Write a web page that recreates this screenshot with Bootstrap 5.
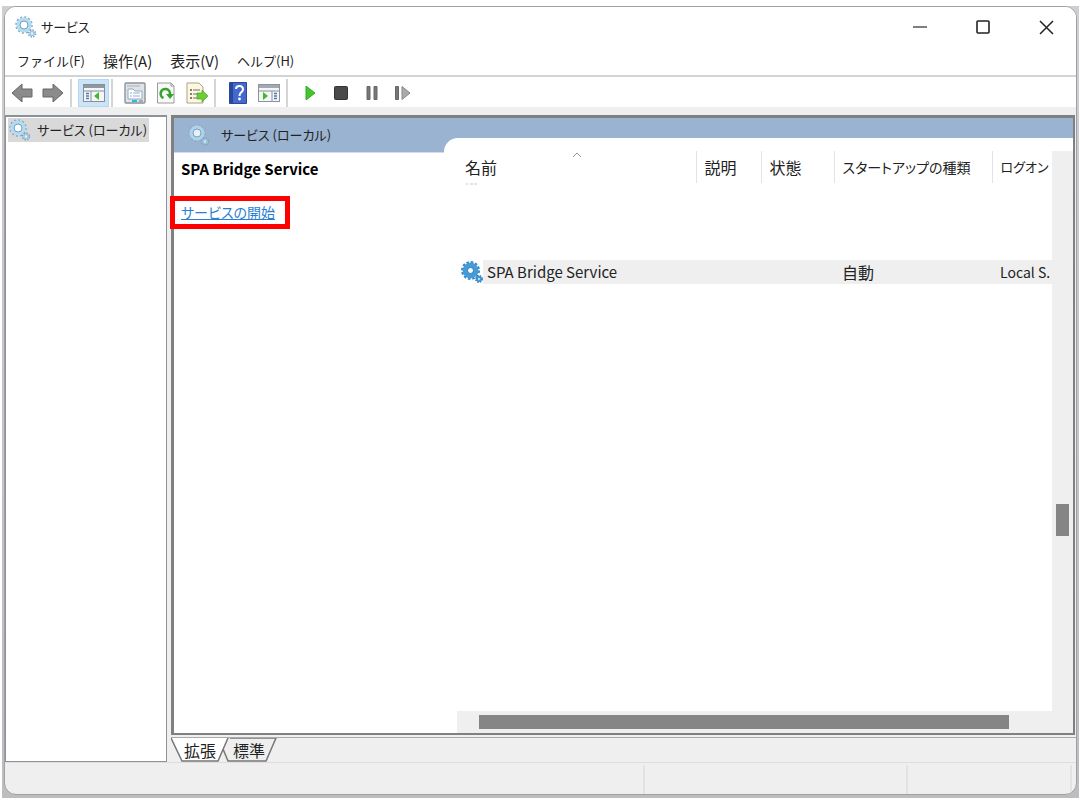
<!DOCTYPE html>
<html lang="ja">
<head>
<meta charset="utf-8">
<meta name="viewport" content="width=device-width, initial-scale=1">
<title>サービス</title>
<link rel="stylesheet" href="https://cdn.jsdelivr.net/npm/bootstrap@5.3.0/dist/css/bootstrap.min.css">
<style>
body{font-family:"Noto Sans CJK JP",sans-serif;font-size:16px;line-height:24px;color:#222;font-feature-settings:"palt";background:#fff;min-height:100vh;padding:6px 1px 3px 2px}
.backdrop{background:linear-gradient(#cfcfd1,#bdbdbf);padding:0 2px 3px}
.app-window{background:#efefef;border:1px solid #a0a0a0;border-radius:12px;overflow:hidden;min-width:0}
.shrinkable{min-width:0}
.kana{font-size:13px}
.kana-lg{font-size:14px}
button{border:0;background:none;color:inherit;padding:0}
svg{display:block;flex:none}
.titlebar{height:39px;padding:0 18px 0 10px}
.win-buttons{gap:39px}
.menubar{height:31px;padding:0 12px;gap:18px;border-bottom:2px solid #d3d3d3}
.menubar button{font-size:15px}
.menubar .kana{font-size:13px}
.toolstrip{height:30px;padding:2px 1px 0}
.toolstrip button{width:31px;height:28px;display:flex;align-items:center;justify-content:center}
.toolstrip .active-tool{background:#cce4f8;border:1px solid #b5d7f3}
.rule{width:2px;height:28px;background:#d5d5d5;margin:0 6px 0 2px}
.main-area{padding-top:8px;gap:4px}
.tree{width:162px;border:1px solid #8c929b;border-top-width:2px;background:#fff;padding:1px 2px}
.tree-node{background:#d9d9d9;height:24px;width:max-content;gap:6px;padding:0 2px 0 1px;color:#222}
.pane{border:3px solid #808080;border-right-width:2px;border-bottom-width:2px;background:#9ab3d0;margin-right:1px}
.detail{width:270px}
.banner{height:34px;padding-left:14px;gap:11px}
.detail-body{background:#fff;border-top:1px solid #d0dcea;padding:4px 7px;font-size:15px}
.start-link{color:#2a7fd4;text-decoration:underline;align-self:flex-start;border:5px solid #f00;margin:15px 0 0 -11px;padding:0 10px 0 6px;line-height:23px}
.list-side{padding-top:20px}
.list-sheet{background:#fff;border-top-left-radius:14px;padding:13px 0 0 13px}
.svc-table{width:100%;table-layout:fixed;border-collapse:collapse}
.col-desc{width:65px}
.col-state{width:73px}
.col-start{width:158px}
.col-logon{width:60px}
.svc-table th{font-weight:400;height:32px;padding:0 0 0 8px;border-right:1px solid #e3e3e3;white-space:nowrap;position:relative}
.svc-table th:last-child{border:0}
.svc-table td{height:24px;padding:0 0 0 8px;white-space:nowrap}
.svc-table .gap-row td{height:77px;vertical-align:top}
.svc-row td{background:#efefef}
.svc-row td:first-child{padding-left:4px;font-size:15px;background:linear-gradient(90deg,#fff 26px,#efefef 26px)}
.sort-mark{position:absolute;top:1px;left:48%}
.vbar{width:21px;background:#efefef;padding:353px 4px 0}
.vthumb{height:32px;background:#858585}
.hbar{height:22px;background:#efefef;padding:4px 43px 4px 22px}
.hthumb{height:14px;background:#858585}
.tabs{height:25px;margin-top:2px;border-top:1px solid #aaa}
.tab-btn{position:relative;z-index:1;height:24px;width:58px;line-height:22px}
.tab-btn svg{position:absolute;left:0;top:0;z-index:-1}
.tab-btn+.tab-btn{z-index:0;margin-left:-9px}
.statusbar{height:32px;border-top:1px solid #dedede}
.statusbar div{border-right:2px solid #e2e2e2;margin-top:2px}
.status-main{width:640px}
.status-mid{width:263px}
</style>
</head>
<body class="d-flex flex-column">
<svg width="0" height="0" class="position-absolute" aria-hidden="true">
<symbol id="gears" viewBox="0 0 22 22"><circle cx="9" cy="9" r="7.6" fill="none" stroke="#8aabc5" stroke-width="2.4" stroke-dasharray="2 1.98"/><circle cx="9" cy="9" r="5.6" fill="none" stroke="#b3dcf2" stroke-width="4"/><circle cx="9" cy="9" r="4" fill="#fff" stroke="#6d9fc4"/><circle cx="17" cy="17.5" r="3.4" fill="none" stroke="#7ca0bd" stroke-width="1.8" stroke-dasharray="1.4 1.27"/><circle cx="17" cy="17.5" r="2" fill="#e5f4fb" stroke="#9bc8e2" stroke-width="1.6"/></symbol>
<symbol id="gears-solid" viewBox="0 0 22 22"><circle cx="9.5" cy="9.5" r="8" fill="none" stroke="#3b87c4" stroke-width="3" stroke-dasharray="2.4 1.79"/><circle cx="9.5" cy="9.5" r="5.4" fill="#fff" stroke="#459bd8" stroke-width="5"/><circle cx="9.5" cy="9.5" r="3" fill="none" stroke="#2e7dbd"/><circle cx="18" cy="18" r="3" fill="#459bd8" stroke="#3b87c4" stroke-width="2" stroke-dasharray="1.4 1"/><circle cx="18" cy="18" r="1" fill="#d7ecfa"/></symbol>
</svg>
<div class="backdrop d-flex flex-column flex-grow-1">
<div class="app-window d-flex flex-column flex-grow-1">
<header class="bg-white">
<div class="titlebar d-flex align-items-center">
<svg width="22" height="22"><use href="#gears"/></svg><span class="kana ps-1 flex-grow-1">サービス</span>
<div class="win-buttons d-flex">
<button aria-label="最小化"><svg width="24" height="24"><path d="M5 12h14" stroke="#555" stroke-width="1.4"/></svg></button>
<button aria-label="最大化"><svg width="24" height="24"><rect x="6" y="6" width="12" height="12" rx="1" fill="none" stroke="#222" stroke-width="1.6"/></svg></button>
<button aria-label="閉じる"><svg width="24" height="24"><path d="M6 6l13 13M19 6L6 19" stroke="#222" stroke-width="1.5"/></svg></button>
</div>
</div>
<nav class="menubar d-flex align-items-center" aria-label="メニュー">
<button class="kana">ファイル(F)</button><button>操作(A)</button><button>表示(V)</button><button class="kana">ヘルプ(H)</button>
</nav>
<div class="toolstrip d-flex align-items-center">
<button aria-label="戻る"><svg width="22" height="20"><path d="M1 10L11 1v5h10v8H11v5z" fill="#8b8b8b" stroke="#666"/></svg></button>
<button aria-label="進む"><svg width="22" height="20"><path d="M21 10L11 1v5H1v8h10v5z" fill="#8b8b8b" stroke="#666"/></svg></button>
<span class="rule"></span>
<button class="active-tool" aria-label="ツリーの表示"><svg width="22" height="18"><rect x=".5" y=".5" width="21" height="17" fill="#f5f6f8" stroke="#858e99"/><path d="M1 1h20v3H1z" fill="#8e99a6"/><path d="M1 7h20M8 7v10" stroke="#858e99"/><path d="M3 9.500h3M3 12h3M3 14.500h3" stroke="#4c79b5" stroke-width="1.4"/><path d="M16 8v8l-5-4z" fill="#43b82c"/></svg></button>
<span class="rule"></span>
<button aria-label="プロパティ"><svg width="22" height="22"><rect x="1" y="1" width="20" height="20" rx="1" fill="#dfe3e8" stroke="#8a929b" stroke-width="1.4"/><path d="M3 4h13" stroke="#a8b0b9"/><path d="M4 7h5l2 2h7v8H4z" fill="#fff" stroke="#8fa6c0"/><path d="M6 11h2M9 11h7M6 14h2M9 14h7" stroke="#8eb0d4"/><path d="M8 19h5" stroke="#29b8e8" stroke-width="2"/><path d="M15 19h4" stroke="#aaa" stroke-width="2"/></svg></button>
<button aria-label="最新の情報に更新"><svg width="20" height="22"><path d="M1.500 1H15l3 3v17H1.500z" fill="#f8f8f8" stroke="#9a9a9a"/><path d="M15 1v3h3" fill="none" stroke="#9a9a9a"/><path d="M7.500 16A4.700 4.700 0 1 1 14 12" fill="none" stroke="#35a32c" stroke-width="2.600"/><path d="M10 12h8l-4 5z" fill="#35a32c"/></svg></button>
<button aria-label="一覧のエクスポート"><svg width="22" height="22"><path d="M1 1h12l4 4v16H1z" fill="#fdf7dc" stroke="#a8a389"/><path d="M4 8h2M4 12h2M4 16h2" stroke="#555" stroke-width="1.6"/><path d="M7 8h7M7 12h4M7 16h4" stroke="#9a9aa8" stroke-width="1.4"/><path d="M11 11h5V8l6 6-6 6v-3h-5z" fill="#6ccd35" stroke="#45a52a" stroke-width=".7"/></svg></button>
<span class="rule"></span>
<button aria-label="ヘルプ"><svg width="18" height="22"><path d="M.5.500h17v21H.500z" fill="#4568cf" stroke="#2e4695"/><path d="M1 1h3v20H1z" fill="#27489f"/><path d="M7 7Q7 4 10.500 4T14 7.500Q14 9 12 10.500 10.500 12 10.500 14" fill="none" stroke="#fff" stroke-width="2"/><circle cx="10.500" cy="17" r="1.400" fill="#fff"/></svg></button>
<button aria-label="操作ウィンドウ"><svg width="22" height="18"><rect x=".5" y=".5" width="21" height="17" fill="#f5f6f8" stroke="#8a929b"/><path d="M1 1h20v3H1z" fill="#a2a9b1"/><path d="M1 7h20M14 7v10" stroke="#8a929b"/><path d="M16 9.500h3M16 12h3M16 14.500h3" stroke="#4c79b5" stroke-width="1.400"/><path d="M5 8v8l5-4z" fill="#43b82c"/></svg></button>
<span class="rule"></span>
<button aria-label="開始"><svg width="12" height="16"><path d="M2 1v14l9-7z" fill="#43c62c" stroke="#35a827"/></svg></button>
<button aria-label="停止"><svg width="14" height="14"><rect x=".5" y=".5" width="13" height="13" rx="1" fill="#4a4a4a" stroke="#333"/></svg></button>
<button aria-label="一時停止"><svg width="12" height="14"><path d="M1 .5h3v13H1zM8 .5h3v13H8z" fill="#777" stroke="#666"/></svg></button>
<button aria-label="再起動"><svg width="16" height="14"><path d="M.5.500h3v13h-3z" fill="#777" stroke="#666"/><path d="M7 .5v13l8-6.500z" fill="#aaa" stroke="#888"/></svg></button>
</div>
</header>
<div class="main-area d-flex flex-grow-1">
<nav class="tree flex-shrink-0" aria-label="コンソール ツリー">
<a href="#" class="tree-node kana d-flex align-items-center text-decoration-none text-nowrap"><svg width="22" height="22"><use href="#gears"/></svg>サービス (ローカル)</a>
</nav>
<div class="shrinkable d-flex flex-column flex-grow-1">
<main class="pane d-flex flex-grow-1">
<section class="detail d-flex flex-column flex-shrink-0">
<div class="banner kana d-flex align-items-center"><svg width="22" height="22" opacity=".8"><use href="#gears"/></svg>サービス (ローカル)</div>
<div class="detail-body d-flex flex-column flex-grow-1"><strong class="fw-bold text-black">SPA Bridge Service</strong><a href="#" class="start-link kana-lg">サービスの開始</a></div>
</section>
<section class="list-side shrinkable d-flex flex-grow-1">
<div class="list-sheet shrinkable d-flex flex-grow-1">
<div class="shrinkable d-flex flex-column flex-grow-1">
<table class="svc-table">
<colgroup><col><col class="col-desc"><col class="col-state"><col class="col-start"><col class="col-logon"></colgroup>
<thead><tr><th>名前<svg class="sort-mark" width="10" height="6"><path d="M1 5l4-4 4 4" fill="none" stroke="#999"/></svg></th><th>説明</th><th>状態</th><th class="kana-lg">スタートアップの種類</th><th class="kana">ログオン</th></tr></thead>
<tbody>
<tr class="gap-row" aria-hidden="true"><td colspan="5"><svg width="14" height="3"><path d="M1 1h2M5 1h3M9 1h3" stroke="#c5cbd6"/></svg></td></tr>
<tr class="svc-row"><td><span class="d-flex align-items-center"><svg width="22" height="22"><use href="#gears-solid"/></svg><span class="ms-1">SPA Bridge Service</span></span></td><td></td><td></td><td>自動</td><td class="kana-lg">Local S.</td></tr>
</tbody>
</table>
<div class="hbar mt-auto"><div class="hthumb"></div></div>
</div>
<div class="vbar flex-shrink-0"><div class="vthumb"></div></div>
</div>
</section>
</main>
<div class="tabs d-flex">
<button class="tab-btn"><svg width="58" height="24"><path d="M0 0l11 23h36L57 0" fill="#fff" stroke="#777" stroke-width="1.500"/></svg>拡張</button><button class="tab-btn"><svg width="58" height="24"><path d="M3 11l5 12h38L56 0H10" fill="#efefef" stroke="#777" stroke-width="1.500"/></svg>標準</button>
</div>
</div>
</div>
<footer class="statusbar d-flex"><div class="status-main"></div><div class="status-mid"></div><div class="flex-grow-1 me-1"></div></footer>
</div>
</div>
<script src="https://cdn.jsdelivr.net/npm/bootstrap@5.3.0/dist/js/bootstrap.bundle.min.js"></script>
</body>
</html>
